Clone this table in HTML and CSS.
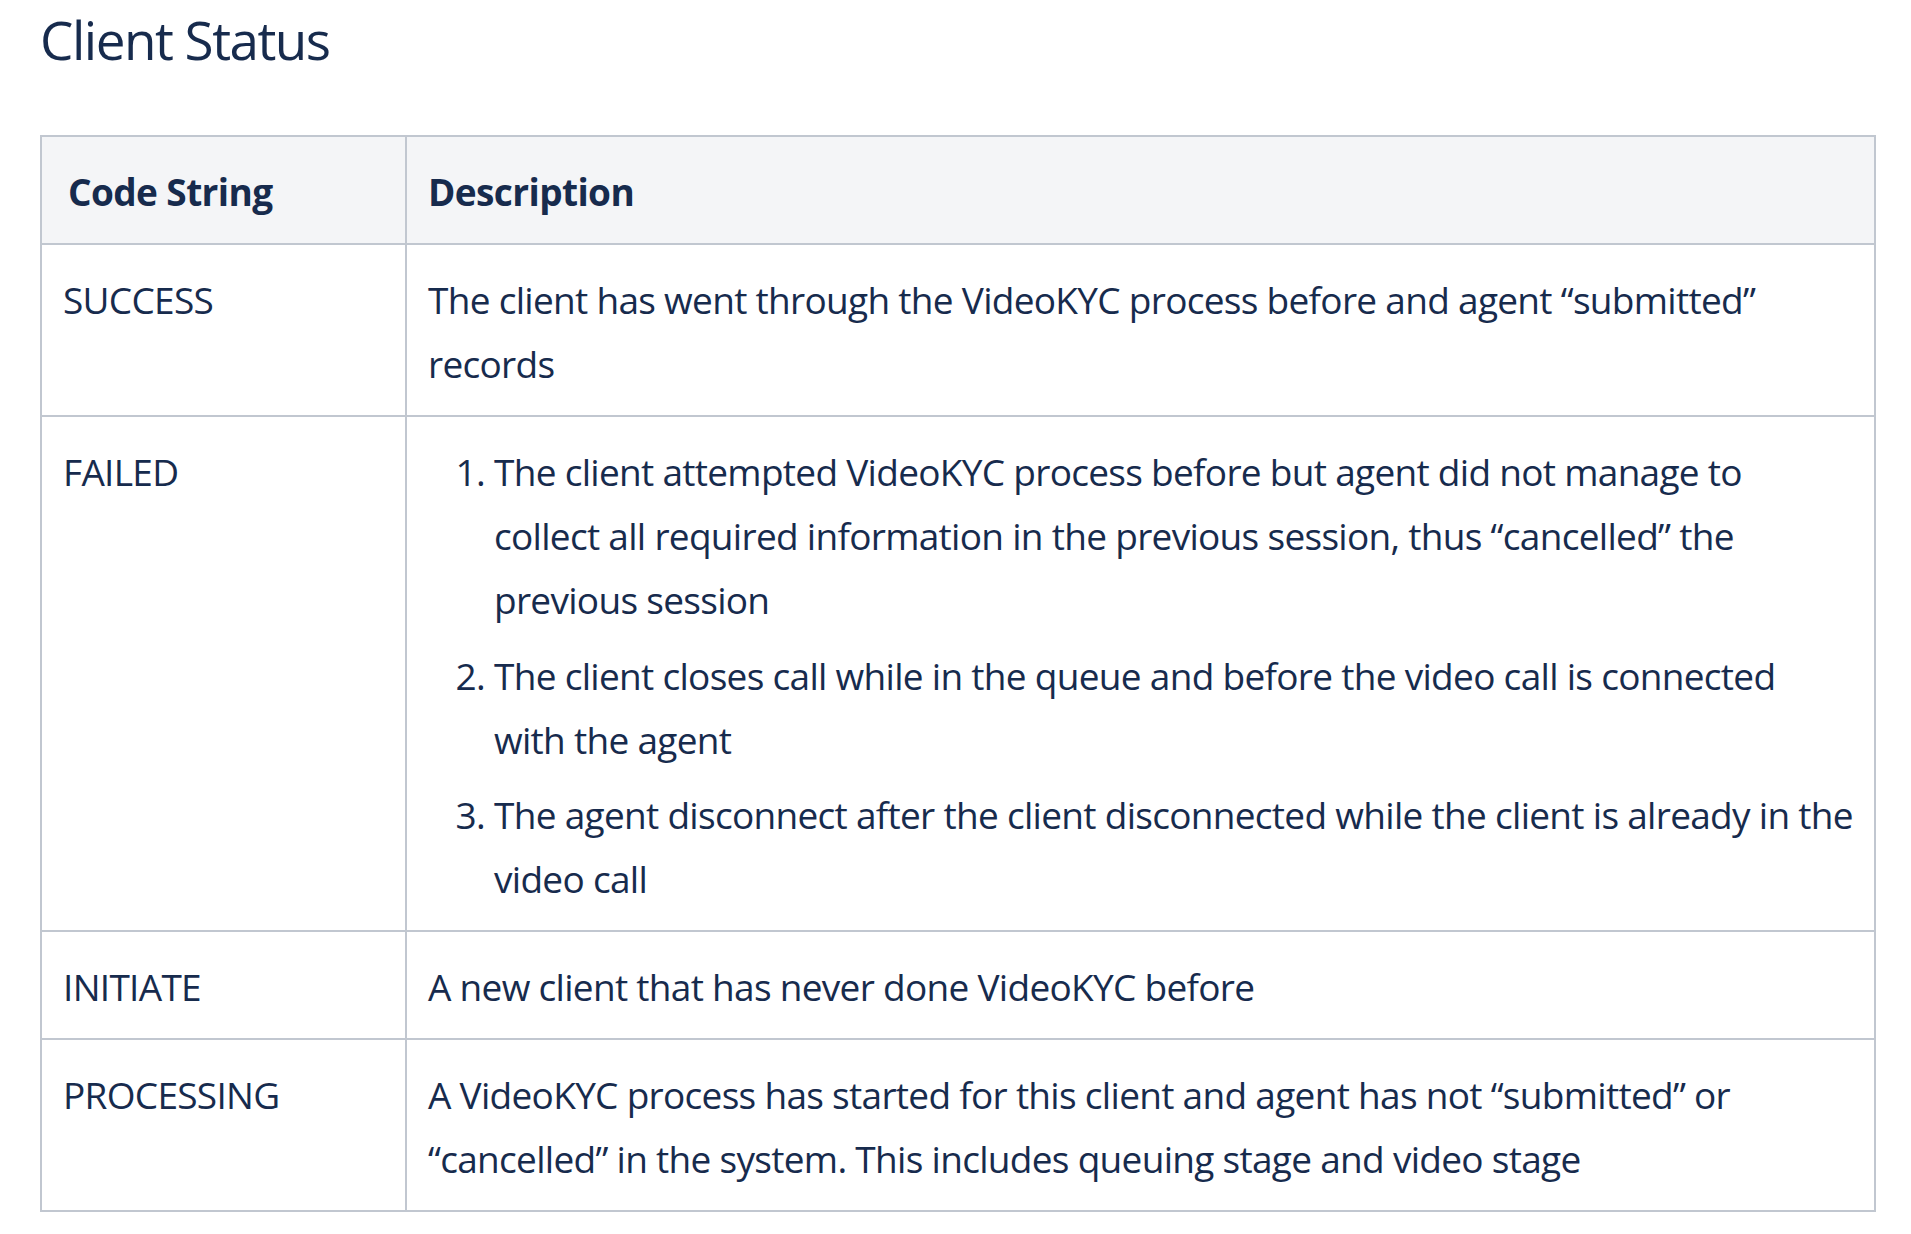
FILE: index.html
```html
<!DOCTYPE html>
<html lang="en">
<head>
<meta charset="utf-8">
<title>Client Status</title>
<link rel="stylesheet" href="styles.css">
</head>
<body>
<main class="page">
  <h2 class="title">Client Status</h2>
  <table class="status-table">
    <colgroup>
      <col class="col-code">
      <col class="col-desc">
    </colgroup>
    <thead>
      <tr>
        <th class="th-code">Code String</th>
        <th>Description</th>
      </tr>
    </thead>
    <tbody>
      <tr>
        <td>SUCCESS</td>
        <td>The client has went through the VideoKYC process before and agent “submitted”<br>records</td>
      </tr>
      <tr>
        <td>FAILED</td>
        <td>
          <ol class="reasons">
            <li>The client attempted VideoKYC process before but agent did not manage to<br>collect all required information in the previous session, thus “cancelled” the<br>previous session</li>
            <li>The client closes call while in the queue and before the video call is connected<br>with the agent</li>
            <li>The agent disconnect after the client disconnected while the client is already in the<br>video call</li>
          </ol>
        </td>
      </tr>
      <tr>
        <td>INITIATE</td>
        <td>A new client that has never done VideoKYC before</td>
      </tr>
      <tr>
        <td>PROCESSING</td>
        <td>A VideoKYC process has started for this client and agent has not “submitted” or<br>“cancelled” in the system. This includes queuing stage and video stage</td>
      </tr>
    </tbody>
  </table>
</main>
</body>
</html>
```
FILE: styles.css
```css
html, body {
  margin: 0;
  padding: 0;
  background: #ffffff;
}

body {
  font-family: "Open Sans", "Noto Sans", "Liberation Sans", sans-serif;
  color: #172B4D;
}

.page {
  padding: 0 35px 0 40px;
}

.title {
  margin: 0 0 56px 0;
  font-size: 53px;
  line-height: 79px;
  font-weight: 400;
  letter-spacing: -1.5px;
  color: #172B4D;
}

.status-table {
  width: 1836px;
  table-layout: fixed;
  border-collapse: collapse;
  border: 2px solid #C1C7D0;
  font-size: 37px;
  line-height: 64px;
  letter-spacing: -0.7px;
}

.col-code {
  width: 365px;
}

.status-table th,
.status-table td {
  border: 2px solid #C1C7D0;
  padding: 23px 21px 19px 21px;
  text-align: left;
  vertical-align: top;
  white-space: nowrap;
}

.status-table th {
  background: #F4F5F7;
  font-weight: 700;
  letter-spacing: -0.6px;
}

.status-table .th-code {
  padding-left: 26px;
}

.reasons {
  margin: 0;
  padding: 0 0 0 66px;
}

.reasons li + li {
  margin-top: 11.5px;
}
```
